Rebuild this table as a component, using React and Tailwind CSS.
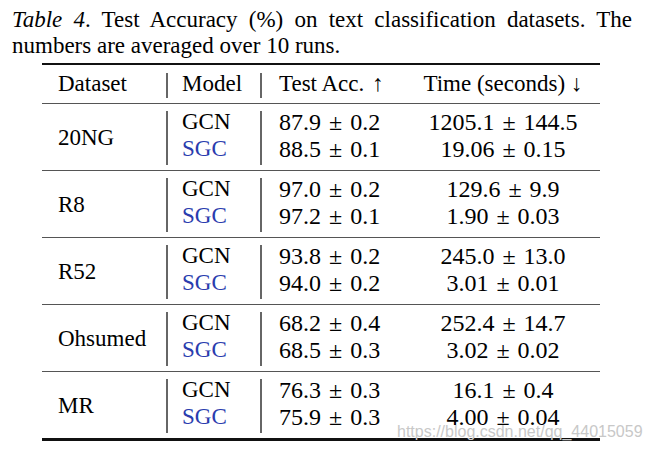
import React from "react";

const rows = [
  { name: "20NG", gcn: ["87.9", "0.2", "1205.1", "144.5"], sgc: ["88.5", "0.1", "19.06", "0.15"] },
  { name: "R8", gcn: ["97.0", "0.2", "129.6", "9.9"], sgc: ["97.2", "0.1", "1.90", "0.03"] },
  { name: "R52", gcn: ["93.8", "0.2", "245.0", "13.0"], sgc: ["94.0", "0.2", "3.01", "0.01"] },
  { name: "Ohsumed", gcn: ["68.2", "0.4", "252.4", "14.7"], sgc: ["68.5", "0.3", "3.02", "0.02"] },
  { name: "MR", gcn: ["76.3", "0.3", "16.1", "0.4"], sgc: ["75.9", "0.3", "4.00", "0.04"] },
];

function PM({ a, b }) {
  return (
    <span className="whitespace-nowrap">
      {a}
      <span className="mx-[8px]">±</span>
      {b}
    </span>
  );
}

function Group({ row }) {
  return (
    <div className="grid grid-cols-[124px_94px_146px_194px] pt-[7px] pb-[5px] border-t border-[#555]">
      <div className="h-[53.6px] flex items-center pl-[16px] text-[23px]">{row.name}</div>
      <div className="border-l-2 border-[#666] pl-[14px] text-[23px]">
        <div className="h-[27px] leading-[22px]">GCN</div>
        <div className="h-[27px] leading-[22px] text-[#2a3cae]">SGC</div>
      </div>
      <div className="border-l-2 border-[#666] pl-[17px] text-[24px]">
        <div className="h-[27px] leading-[22px]">
          <PM a={row.gcn[0]} b={row.gcn[1]} />
        </div>
        <div className="h-[27px] leading-[22px]">
          <PM a={row.sgc[0]} b={row.sgc[1]} />
        </div>
      </div>
      <div className="text-center text-[24px]">
        <div className="h-[27px] leading-[22px]">
          <PM a={row.gcn[2]} b={row.gcn[3]} />
        </div>
        <div className="h-[27px] leading-[22px]">
          <PM a={row.sgc[2]} b={row.sgc[3]} />
        </div>
      </div>
    </div>
  );
}

export default function App() {
  return (
    <div className="relative w-[650px] h-[452px] bg-white overflow-hidden text-black font-['Liberation_Serif',serif]">
      {/* caption */}
      <p className="pl-[12px] pt-[7px] w-[632px] text-[23px] leading-[26px] text-justify">
        <i>Table 4</i>. Test Accuracy (%) on text classification datasets. The numbers are averaged over 10 runs.
      </p>

      {/* table */}
      <div className="ml-[42px] mt-[4px] w-[558px] border-t-2 border-[#111]">
        <div className="grid grid-cols-[124px_94px_146px_194px] pt-[8px] pb-[5px] text-[23px]">
          <div className="h-[25px] leading-[22px] pl-[16px]">Dataset</div>
          <div className="h-[25px] leading-[22px] border-l-2 border-[#666] pl-[14px]">Model</div>
          <div className="h-[25px] leading-[22px] border-l-2 border-[#666] pl-[17px]">
            Test Acc.<span className="ml-[8px]">↑</span>
          </div>
          <div className="h-[25px] leading-[22px] text-center">
            Time (seconds)<span className="ml-[6px]">↓</span>
          </div>
        </div>
        {rows.map((r) => (
          <Group key={r.name} row={r} />
        ))}
        <div className="border-t-[3px] border-[#111]" />
      </div>

      {/* watermark */}
      <div className="absolute left-[397px] top-[423px] text-[16px] leading-[18px] text-[#c8c8c8] font-['Liberation_Sans',sans-serif] whitespace-nowrap">
        https://blog.csdn.net/qq_44015059
      </div>
    </div>
  );
}
